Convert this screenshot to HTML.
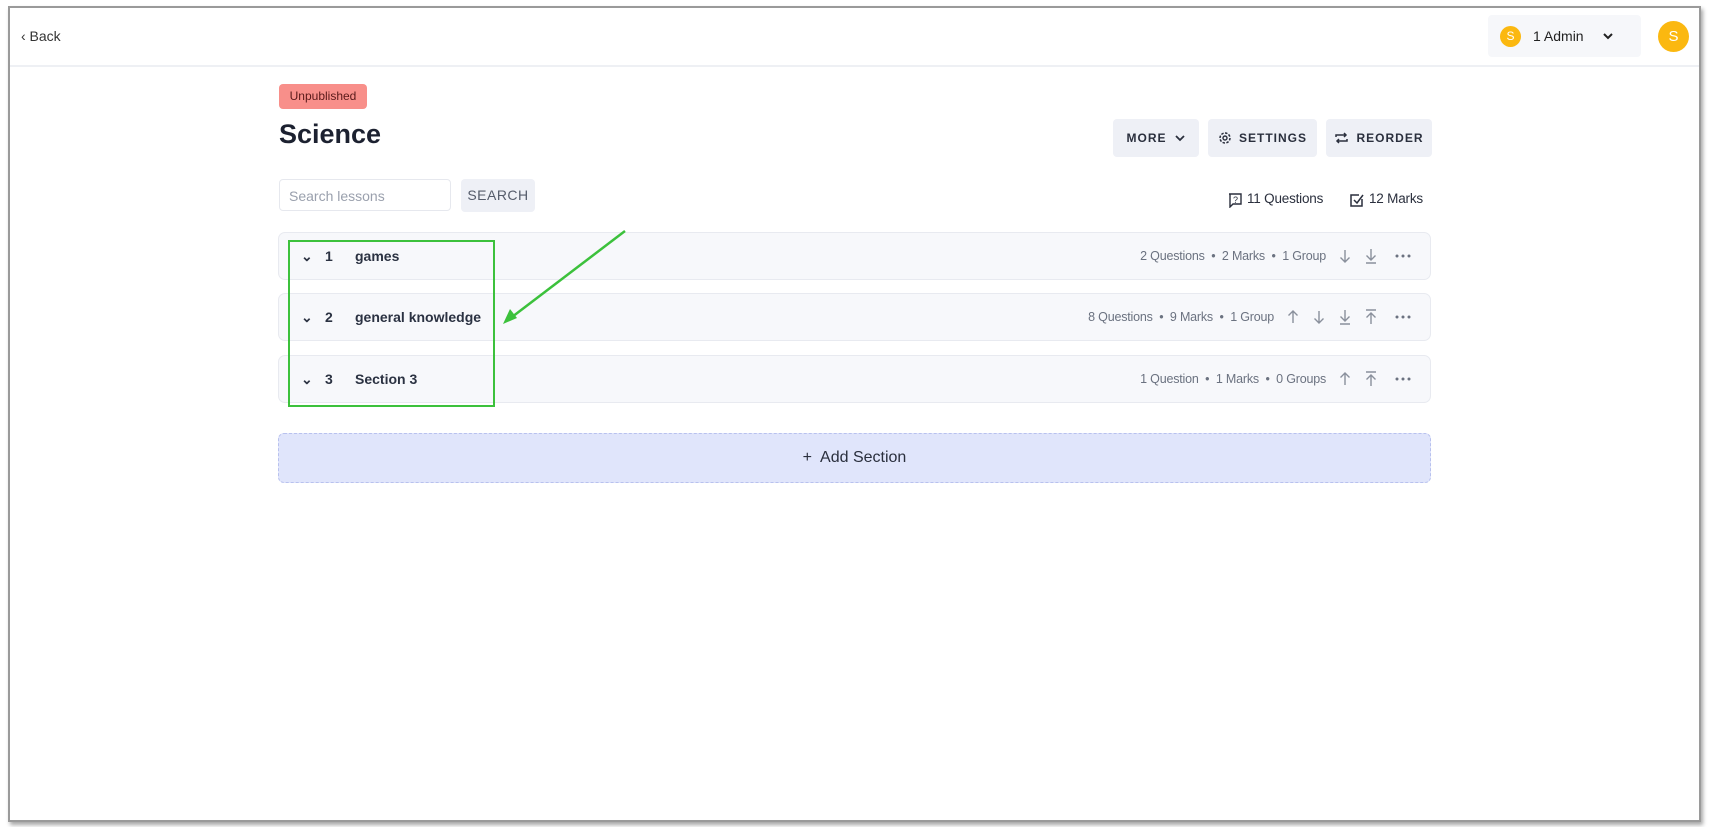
<!DOCTYPE html>
<html><head><meta charset="utf-8"><style>
*{box-sizing:border-box;margin:0;padding:0}
body{width:1720px;height:827px;background:#fff;font-family:"Liberation Sans",sans-serif;color:#1f2433;position:relative;overflow:hidden}
.frame{position:absolute;left:8px;top:6px;width:1693px;height:816px;border:2px solid #9a9a9a;box-shadow:2px 3px 4px rgba(0,0,0,.35);background:#fff}
.abs{position:absolute}
.hdr{position:absolute;left:10px;top:65px;width:1689px;height:2px;background:#eef0f4}
.btn{position:absolute;background:#eef0f6;border-radius:4px;font-size:12px;font-weight:bold;letter-spacing:1px;color:#2a2f3d;display:flex;align-items:center;justify-content:center;gap:7px}
.row{position:absolute;left:278px;width:1153px;height:48px;background:#f7f8fb;border:1px solid #e8eaf0;border-radius:7px}
.row .l{position:absolute;top:0;height:100%;display:flex;align-items:center;font-size:14px;font-weight:bold;color:#2b3242}
.meta{position:absolute;right:14px;top:0;height:100%;display:flex;align-items:center;font-size:12.5px;color:#6b7280;gap:0}
.meta .t{margin-right:6px;letter-spacing:-.2px}
.ic{width:26px;display:flex;justify-content:center;align-items:center}
</style></head><body>
<svg width="0" height="0" style="position:absolute"><defs>
<symbol id="dn" viewBox="0 0 14 16"><path d="M7 2v12M2.5 9.5L7 14l4.5-4.5" stroke="#8a909c" stroke-width="1.4" fill="none"/></symbol>
<symbol id="up" viewBox="0 0 14 16"><path d="M7 14V2M2.5 6.5L7 2l4.5 4.5" stroke="#8a909c" stroke-width="1.4" fill="none"/></symbol>
<symbol id="bot" viewBox="0 0 14 16"><path d="M7 1v11M2.5 7.5L7 12l4.5-4.5M2 15h10" stroke="#8a909c" stroke-width="1.4" fill="none"/></symbol>
<symbol id="top" viewBox="0 0 14 16"><path d="M7 15V4M2.5 8.5L7 4l4.5 4.5M2 1h10" stroke="#8a909c" stroke-width="1.4" fill="none"/></symbol>
<symbol id="dots" viewBox="0 0 16 4"><circle cx="2" cy="2" r="1.5" fill="#6b7280"/><circle cx="8" cy="2" r="1.5" fill="#6b7280"/><circle cx="14" cy="2" r="1.5" fill="#6b7280"/></symbol>
</defs></svg>
<div class="frame"></div>
<div class="hdr"></div>
<div class="abs" style="left:21px;top:28px;font-size:14px;color:#333">‹ Back</div>
<div class="abs" style="left:1488px;top:15px;width:153px;height:42px;background:#f6f7fa;border-radius:4px"></div>
<div class="abs" style="left:1500px;top:26px;width:21px;height:21px;border-radius:50%;background:#fbb810;color:#fff;font-size:12px;text-align:center;line-height:21px">S</div>
<div class="abs" style="left:1533px;top:28px;font-size:14px;color:#222">1 Admin</div>
<svg class="abs" style="left:1602px;top:31px" width="12" height="10"><path d="M2 3l4 4 4-4" stroke="#222" stroke-width="2" fill="none"/></svg>
<div class="abs" style="left:1658px;top:21px;width:31px;height:31px;border-radius:50%;background:#fbb810;color:#fff;font-size:15px;text-align:center;line-height:31px">S</div>

<div class="abs" style="left:279px;top:84px;width:88px;height:25px;background:#f88f8a;border-radius:4px;font-size:12px;color:#5a1a1a;text-align:center;line-height:25px">Unpublished</div>
<div class="abs" style="left:279px;top:119px;font-size:27px;font-weight:bold;color:#1c2130">Science</div>

<div class="btn" style="left:1113px;top:119px;width:86px;height:38px">MORE <svg width="12" height="10"><path d="M2 3l4 4 4-4" stroke="#2a2f3d" stroke-width="1.8" fill="none"/></svg></div>
<div class="btn" style="left:1208px;top:119px;width:109px;height:38px"><svg width="14" height="14" viewBox="0 0 14 14"><circle cx="7" cy="7" r="5" stroke="#2a2f3d" stroke-width="1.5" fill="none" stroke-dasharray="2.5 1.4"/><circle cx="7" cy="7" r="2" stroke="#2a2f3d" stroke-width="1.4" fill="none"/></svg>SETTINGS</div>
<div class="btn" style="left:1326px;top:119px;width:106px;height:38px"><svg width="15" height="14" viewBox="0 0 15 14"><path d="M2 6V4h10M10 2l2 2-2 2M13 8v2H3M5 12l-2-2 2-2" stroke="#2a2f3d" stroke-width="1.5" fill="none"/></svg>REORDER</div>

<div class="abs" style="left:279px;top:179px;width:172px;height:32px;border:1px solid #e6e8ee;border-radius:4px;font-size:14px;color:#9aa0ad;padding:8px 9px">Search lessons</div>
<div class="abs" style="left:461px;top:179px;width:74px;height:33px;background:#eef0f6;border-radius:4px;font-size:14px;color:#555c6b;text-align:center;line-height:33px;letter-spacing:.5px">SEARCH</div>

<svg class="abs" style="left:1227px;top:192px" width="16" height="16" viewBox="0 0 16 16"><path d="M2 2h12v10H6l-3 3V2z" stroke="#2a2f3d" stroke-width="1.4" fill="none"/><text x="6" y="11" font-size="9" font-family="Liberation Sans" fill="#2a2f3d">?</text></svg>
<div class="abs" style="left:1247px;top:191px;font-size:13.5px;color:#2a2f3d;letter-spacing:-.2px">11 Questions</div>
<svg class="abs" style="left:1349px;top:192px" width="16" height="16" viewBox="0 0 16 16"><path d="M13 7v7H2V3h8" stroke="#2a2f3d" stroke-width="1.5" fill="none"/><path d="M5 8l3 3 6-8" stroke="#2a2f3d" stroke-width="1.5" fill="none"/></svg>
<div class="abs" style="left:1369px;top:191px;font-size:13.5px;color:#2a2f3d;letter-spacing:-.2px">12 Marks</div>

<div class="row" style="top:232px"><div class="l" style="left:22px">⌄</div><div class="l" style="left:46px">1</div><div class="l" style="left:76px">games</div>
<div class="meta"><span class="t">2 Questions &nbsp;•&nbsp; 2 Marks &nbsp;•&nbsp; 1 Group</span><span class="ic"><svg width="14" height="16"><use href="#dn"/></svg></span><span class="ic"><svg width="14" height="16"><use href="#bot"/></svg></span><span class="ic" style="margin-left:6px"><svg width="16" height="4"><use href="#dots"/></svg></span></div></div>
<div class="row" style="top:293px"><div class="l" style="left:22px">⌄</div><div class="l" style="left:46px">2</div><div class="l" style="left:76px">general knowledge</div>
<div class="meta"><span class="t">8 Questions &nbsp;•&nbsp; 9 Marks &nbsp;•&nbsp; 1 Group</span><span class="ic"><svg width="14" height="16"><use href="#up"/></svg></span><span class="ic"><svg width="14" height="16"><use href="#dn"/></svg></span><span class="ic"><svg width="14" height="16"><use href="#bot"/></svg></span><span class="ic"><svg width="14" height="16"><use href="#top"/></svg></span><span class="ic" style="margin-left:6px"><svg width="16" height="4"><use href="#dots"/></svg></span></div></div>
<div class="row" style="top:355px"><div class="l" style="left:22px">⌄</div><div class="l" style="left:46px">3</div><div class="l" style="left:76px">Section 3</div>
<div class="meta"><span class="t">1 Question &nbsp;•&nbsp; 1 Marks &nbsp;•&nbsp; 0 Groups</span><span class="ic"><svg width="14" height="16"><use href="#up"/></svg></span><span class="ic"><svg width="14" height="16"><use href="#top"/></svg></span><span class="ic" style="margin-left:6px"><svg width="16" height="4"><use href="#dots"/></svg></span></div></div>

<div class="abs" style="left:278px;top:433px;width:1153px;height:50px;background:#e0e5fb;border:1px dashed #b8c1ee;border-radius:6px;font-size:16px;color:#2a2f3d;text-align:center;line-height:48px">+&nbsp; Add Section</div>

<div class="abs" style="left:288px;top:240px;width:207px;height:167px;border:2.5px solid #3cc13c"></div>
<svg class="abs" style="left:0;top:0" width="1720" height="827"><line x1="625" y1="231" x2="512" y2="317" stroke="#3cc13c" stroke-width="2.5"/><path d="M503 324l7-15 7 9z" fill="#3cc13c"/></svg>
</body></html>
